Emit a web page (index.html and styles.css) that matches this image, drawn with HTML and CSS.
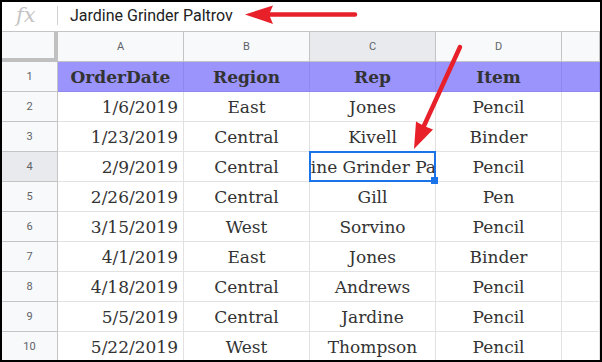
FILE: index.html
```html
<!DOCTYPE html>
<html lang="en">
<head>
    <meta charset="UTF-8">
    <title>Sheet</title>
    <link rel="stylesheet" href="styles.css">
</head>
<body>
    <div class="frame">
        <div class="fbar">
            <span class="fx">fx</span>
            <span class="fsep"></span>
            <span class="ftext">Jardine Grinder Paltrov</span>
        </div>
        <div class="sheet">
            <div class="hd corner"></div>
            <div class="hd">A</div>
            <div class="hd">B</div>
            <div class="hd sel">C</div>
            <div class="hd">D</div>
            <div class="hd"></div>

            <div class="rh">1</div>
            <div class="c top">OrderDate</div>
            <div class="c top">Region</div>
            <div class="c top">Rep</div>
            <div class="c top">Item</div>
            <div class="c top"></div>

            <div class="rh">2</div>
            <div class="c num">1/6/2019</div>
            <div class="c">East</div>
            <div class="c">Jones</div>
            <div class="c">Pencil</div>
            <div class="c"></div>

            <div class="rh">3</div>
            <div class="c num">1/23/2019</div>
            <div class="c">Central</div>
            <div class="c">Kivell</div>
            <div class="c">Binder</div>
            <div class="c"></div>

            <div class="rh sel">4</div>
            <div class="c num">2/9/2019</div>
            <div class="c">Central</div>
            <div class="c active"><span class="clip"><span>Jardine Grinder Paltrov</span></span><i class="handle"></i></div>
            <div class="c">Pencil</div>
            <div class="c"></div>

            <div class="rh">5</div>
            <div class="c num">2/26/2019</div>
            <div class="c">Central</div>
            <div class="c">Gill</div>
            <div class="c">Pen</div>
            <div class="c"></div>

            <div class="rh">6</div>
            <div class="c num">3/15/2019</div>
            <div class="c">West</div>
            <div class="c">Sorvino</div>
            <div class="c">Pencil</div>
            <div class="c"></div>

            <div class="rh">7</div>
            <div class="c num">4/1/2019</div>
            <div class="c">East</div>
            <div class="c">Jones</div>
            <div class="c">Binder</div>
            <div class="c"></div>

            <div class="rh">8</div>
            <div class="c num">4/18/2019</div>
            <div class="c">Central</div>
            <div class="c">Andrews</div>
            <div class="c">Pencil</div>
            <div class="c"></div>

            <div class="rh">9</div>
            <div class="c num">5/5/2019</div>
            <div class="c">Central</div>
            <div class="c">Jardine</div>
            <div class="c">Pencil</div>
            <div class="c"></div>

            <div class="rh">10</div>
            <div class="c num">5/22/2019</div>
            <div class="c">West</div>
            <div class="c">Thompson</div>
            <div class="c">Pencil</div>
            <div class="c"></div>
        </div>

        <!-- callout arrows drawn over the sheet -->
        <svg class="arrows" width="602" height="362" viewBox="0 0 602 362">
            <line x1="355" y1="14.5" x2="266" y2="14.5" stroke="#e8202a" stroke-width="4.5" stroke-linecap="round"/>
            <polygon points="245,14.5 273,5.5 269,14.5 273,24" fill="#e8202a"/>
            <line x1="460" y1="47" x2="423" y2="128" stroke="#e8202a" stroke-width="4.5" stroke-linecap="round"/>
            <polygon points="414,149 416,121.5 424,126 433,129.5" fill="#e8202a"/>
        </svg>
    </div>
</body>
</html>
```

FILE: styles.css
```css
* { margin: 0; padding: 0; box-sizing: border-box; }
html, body { width: 602px; height: 362px; background: #fff; overflow: hidden; }

.frame {
    position: relative;
    width: 602px; height: 362px;
    border: 2px solid #000;
    overflow: hidden;
    background: #fff;
}

.fbar {
    display: flex;
    align-items: center;
    height: 30px;
    border-bottom: 1px solid #c4c4c4;
}
.fx {
    width: 55px;
    padding-left: 14px;
    font-family: "DejaVu Serif", serif;
    font-style: italic;
    font-size: 21px;
    color: #c4c4c4;
    margin-top: -4px;
}
.fsep {
    width: 1px; height: 19px;
    background: #d0d0d0;
    margin-top: -3px;
}
.ftext {
    padding-left: 12px;
    font-family: Roboto, "Liberation Sans", sans-serif;
    font-size: 16px;
    color: #222;
    margin-top: -3px;
}

.sheet {
    display: grid;
    grid-template-columns: 56px repeat(4, 126px) 1fr;
    grid-auto-rows: 30px;
}

.hd, .rh {
    display: flex;
    align-items: center;
    justify-content: center;
    background: #f8f9fa;
    border-right: 1px solid #c4c4c4;
    border-bottom: 1px solid #c4c4c4;
    font-family: Roboto, "Liberation Sans", sans-serif;
    font-size: 11px;
    color: #5f6368;
}
.hd.sel, .rh.sel { background: #e8eaed; }
.corner {
    border-right: 4px solid #c0c0c0;
    border-bottom: 4px solid #c0c0c0;
}

.c {
    display: flex;
    align-items: center;
    justify-content: center;
    border-right: 1px solid #e2e2e2;
    border-bottom: 1px solid #e2e2e2;
    font-family: "DejaVu Serif", serif;
    font-size: 17px;
    color: #333;
    white-space: nowrap;
    overflow: hidden;
    padding-top: 1px;
}
.c.num { justify-content: flex-end; padding-right: 5px; }
.c.top {
    background: #9a94fc;
    border-right-color: #8d87ee;
    border-bottom-color: #8d87ee;
    font-weight: bold;
}

.c.active { position: relative; overflow: visible; }
.c.active .clip {
    display: flex;
    justify-content: center;
    width: 124px;
    overflow: hidden;
}
.c.active .clip span { position: relative; left: 3px; }
.c.active:after {
    content: "";
    position: absolute;
    left: -1px; top: -1px; right: -1px; bottom: -1px;
    border: 2px solid #1a73e8;
}
.handle {
    position: absolute;
    right: -3px; bottom: -3px;
    width: 7px; height: 7px;
    background: #1a73e8;
    z-index: 1;
}

.arrows { position: absolute; left: -2px; top: -2px; }
```
